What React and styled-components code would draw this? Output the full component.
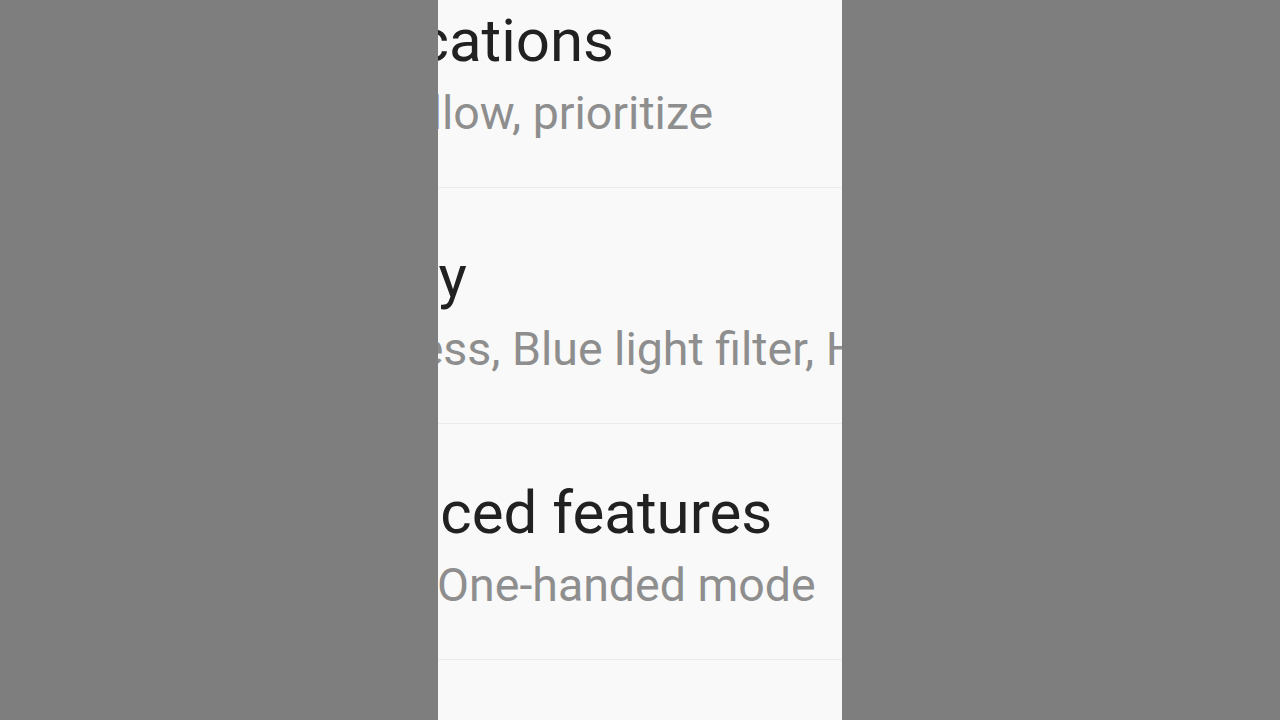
import React from 'react'
import styled, { createGlobalStyle } from 'styled-components'

const GlobalStyle = createGlobalStyle`
  html, body {
    margin: 0;
    padding: 0;
    background: #7e7e7e;
    overflow: hidden;
  }
`

const Stage = styled.div`
  display: flex;
  justify-content: center;
  width: 100%;
  height: 720px;
  background: #7e7e7e;
`

const Screen = styled.div`
  width: 404px;
  height: 720px;
  background: #f9f9f9;
  overflow: hidden;
`

const List = styled.div`
  margin-top: -48px;
  margin-left: -165px;
  width: 569px;
`

const Row = styled.div`
  box-sizing: border-box;
  height: 236px;
  padding-top: 54px;
  border-bottom: 1px solid #ececec;
  white-space: nowrap;
  font-family: Roboto, "Noto Sans", sans-serif;
`

const Title = styled.div`
  font-size: 60px;
  line-height: 70px;
  color: #212121;
`

const Summary = styled.div`
  margin-top: 4px;
  margin-left: -3px;
  font-size: 46.5px;
  line-height: 66px;
  color: #8e8e8e;
`

function SettingItem({ title, summary }) {
  return (
    <Row>
      <Title>{title}</Title>
      <Summary>{summary}</Summary>
    </Row>
  )
}

const items = [
  { title: 'Notifications', summary: 'Block, allow, prioritize' },
  { title: 'Display', summary: 'Brightness, Blue light filter, Home screen' },
  { title: 'Advanced features', summary: 'Games, One-handed mode' },
  { title: 'Device maintenance', summary: 'Battery, Storage, Memory' },
]

export default function App() {
  return (
    <>
      <GlobalStyle />
      <Stage>
        <Screen>
          <List>
            {items.map((it) => (
              <SettingItem key={it.title} title={it.title} summary={it.summary} />
            ))}
          </List>
        </Screen>
      </Stage>
    </>
  )
}
